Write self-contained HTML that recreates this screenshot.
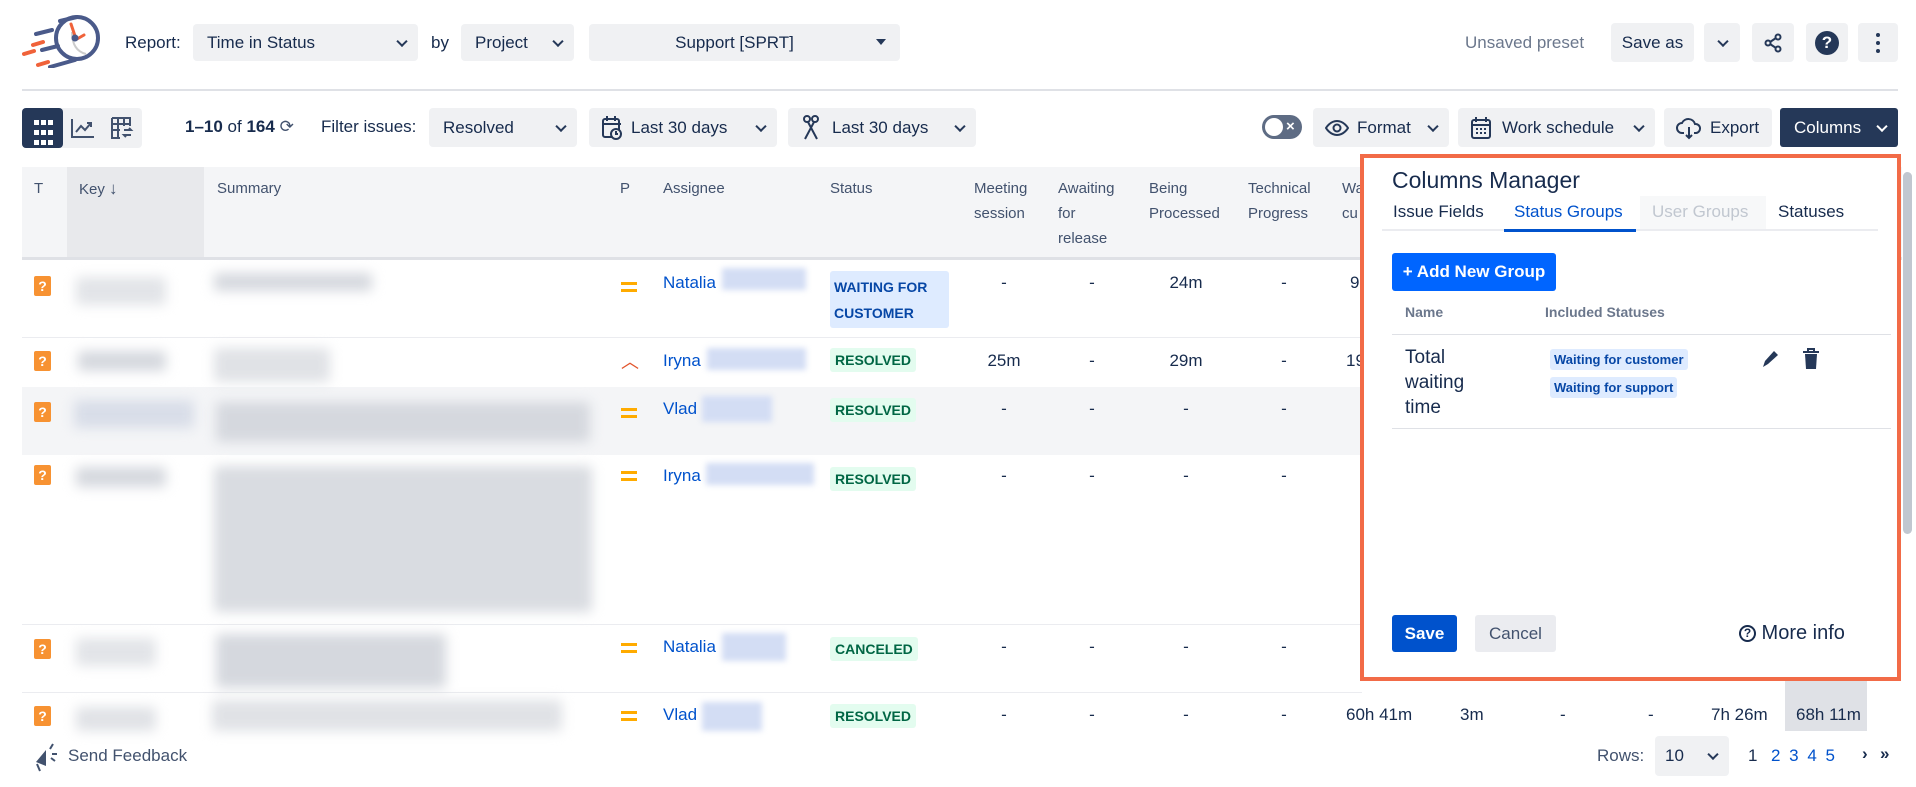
<!DOCTYPE html>
<html><head><meta charset="utf-8"><style>
*{box-sizing:border-box;margin:0;padding:0}
body{width:1916px;height:787px;overflow:hidden;background:#fff;font-family:"Liberation Sans",Arial,sans-serif;color:#172b4d;font-size:17px;position:relative}
.a{position:absolute}
.btn{position:absolute;background:#f0f1f3;border-radius:4px;display:flex;align-items:center;font-size:17px;color:#172b4d}
.chev{position:absolute;right:12px;top:50%;width:8px;height:8px;border-right:2px solid #253858;border-bottom:2px solid #253858;transform:translateY(-70%) rotate(45deg)}
.hd{position:absolute;font-size:15px;color:#42526e;line-height:25px}
.bl{position:absolute;background:#d5d8de;filter:blur(6px);border-radius:3px}
.bb{position:absolute;background:#d3ddf4;filter:blur(3px)}
.q{position:absolute;left:34px;width:17px;height:20px;background:#f79232;color:#fff;font-size:14px;font-weight:bold;text-align:center;line-height:20px;border-radius:2px}
.eq{position:absolute;left:621px;width:16px;height:10px;border-top:3px solid #ffab00;border-bottom:3px solid #ffab00}
.nm{position:absolute;left:663px;color:#0052cc;font-size:17px}
.lz{position:absolute;left:830px;background:#e3fcef;color:#006644;font-weight:bold;font-size:14px;padding:0 5px;line-height:24px;border-radius:3px}
.v{position:absolute;font-size:17px;text-align:center;width:60px;color:#172b4d}
.row{position:absolute;left:22px;width:1340px;border-top:1px solid #ebecf0}
</style></head><body>

<svg class="a" style="left:20px;top:12px" width="84" height="56" viewBox="0 0 84 56">
<circle cx="57" cy="26" r="21" fill="none" stroke="#4a5a8a" stroke-width="4"/>
<path d="M52 20 C52 34 58 40 66 42" stroke="#ccc" stroke-width="2" fill="none"/>
<line x1="51" y1="12" x2="55" y2="24" stroke="#f0623a" stroke-width="3" stroke-linecap="round"/>
<line x1="57" y1="27" x2="64" y2="23" stroke="#f0623a" stroke-width="3" stroke-linecap="round"/>
<circle cx="55" cy="26" r="3.5" fill="#4a5a8a"/>
<line x1="40" y1="9" x2="57" y2="5" stroke="#4a5a8a" stroke-width="4" stroke-linecap="round"/>
<line x1="16" y1="22" x2="32" y2="18" stroke="#4a5a8a" stroke-width="4" stroke-linecap="round"/>
<line x1="22" y1="38" x2="38" y2="34" stroke="#4a5a8a" stroke-width="4" stroke-linecap="round"/>
<line x1="30" y1="55" x2="55" y2="48" stroke="#4a5a8a" stroke-width="4" stroke-linecap="round"/>
<line x1="13" y1="33" x2="23" y2="30" stroke="#f0623a" stroke-width="4" stroke-linecap="round"/>
<line x1="4" y1="42" x2="14" y2="39" stroke="#f0623a" stroke-width="4" stroke-linecap="round"/>
<line x1="18" y1="53" x2="28" y2="50" stroke="#f0623a" stroke-width="4" stroke-linecap="round"/>
</svg>

<div class="a" style="left:125px;top:33px">Report:</div>
<div class="btn" style="left:193px;top:24px;width:225px;height:37px;padding-left:14px">Time in Status<span class="chev"></span></div>
<div class="a" style="left:431px;top:33px">by</div>
<div class="btn" style="left:461px;top:24px;width:113px;height:37px;padding-left:14px">Project<span class="chev"></span></div>
<div class="btn" style="left:589px;top:24px;width:311px;height:37px;justify-content:center;padding-right:20px">Support [SPRT]<span class="a" style="right:14px;top:15px;border:5px solid transparent;border-top:6px solid #253858"></span></div>

<div class="a" style="left:1465px;top:33px;color:#6b778c">Unsaved preset</div>
<div class="btn" style="left:1611px;top:23px;width:83px;height:39px;justify-content:center">Save as</div>
<div class="btn" style="left:1704px;top:23px;width:36px;height:39px"><span class="chev" style="right:13px"></span></div>
<div class="btn" style="left:1752px;top:23px;width:42px;height:39px;justify-content:center">
<svg width="20" height="20" viewBox="0 0 20 20" fill="none" stroke="#253858" stroke-width="2"><circle cx="15" cy="4" r="2.5"/><circle cx="5" cy="10" r="2.5"/><circle cx="15" cy="16" r="2.5"/><path d="M7 9l6-4M7 11l6 4"/></svg></div>
<div class="btn" style="left:1806px;top:23px;width:42px;height:39px;justify-content:center"><span style="width:24px;height:24px;border-radius:50%;background:#253858;color:#fff;font-weight:bold;font-size:17px;text-align:center;line-height:24px">?</span></div>
<div class="btn" style="left:1858px;top:23px;width:40px;height:39px;justify-content:center;flex-direction:column;gap:4px"><i style="width:4px;height:4px;background:#253858;border-radius:50%"></i><i style="width:4px;height:4px;background:#253858;border-radius:50%"></i><i style="width:4px;height:4px;background:#253858;border-radius:50%"></i></div>

<div class="a" style="left:22px;top:89px;width:1876px;height:2px;background:#dfe1e6"></div>

<div class="btn" style="left:22px;top:108px;width:120px;height:40px"></div>
<div class="a" style="left:22px;top:108px;width:41px;height:40px;background:#253858;border-radius:4px;display:grid;grid-template-columns:repeat(3,5px);gap:2px;padding:12px 0 0 12px">
<i style="background:#fff;height:5px"></i><i style="background:#fff;height:5px"></i><i style="background:#fff;height:5px"></i><i style="background:#fff;height:5px"></i><i style="background:#fff;height:5px"></i><i style="background:#fff;height:5px"></i><i style="background:#fff;height:5px"></i><i style="background:#fff;height:5px"></i><i style="background:#fff;height:5px"></i></div>
<svg class="a" style="left:70px;top:117px" width="26" height="22" viewBox="0 0 26 22" fill="none" stroke="#42526e" stroke-width="2"><path d="M2 2v18h22"/><path d="M6 15l5-6 4 4 6-7"/><path d="M17 6h4v4"/></svg>
<svg class="a" style="left:110px;top:116px" width="24" height="24" viewBox="0 0 24 24" fill="none" stroke="#42526e" stroke-width="2"><path d="M2 2h18v8M2 2v20h8M2 8h18M2 14h8M8 2v20M14 2v8"/><path d="M14 14h7l-2-2M21 19h-7l2 2"/></svg>

<div class="a" style="left:185px;top:117px"><b>1–10</b> of <b>164</b> <span style="color:#42526e">⟳</span></div>
<div class="a" style="left:321px;top:117px">Filter issues:</div>
<div class="btn" style="left:429px;top:108px;width:148px;height:39px;padding-left:14px">Resolved<span class="chev"></span></div>
<div class="btn" style="left:589px;top:108px;width:188px;height:39px;padding-left:12px">
<svg width="22" height="26" viewBox="0 0 22 26" fill="none" stroke="#253858" stroke-width="2"><rect x="2" y="4" width="16" height="18" rx="2"/><path d="M6 1v5M14 1v5M2 9h18"/><circle cx="15" cy="19" r="5" fill="#f0f1f3"/><path d="M15 16v3h2"/></svg>
<span style="margin-left:8px">Last 30 days</span><span class="chev"></span></div>
<div class="btn" style="left:788px;top:108px;width:188px;height:39px;padding-left:14px">
<svg width="18" height="26" viewBox="0 0 18 26" fill="none" stroke="#253858" stroke-width="2"><circle cx="5" cy="4" r="3"/><circle cx="13" cy="4" r="3"/><path d="M6 7l9 17M12 7L3 24"/></svg>
<span style="margin-left:12px">Last 30 days</span><span class="chev"></span></div>

<div class="a" style="left:1262px;top:115px;width:40px;height:24px;border-radius:12px;background:#5e6c84"><i class="a" style="left:3px;top:3px;width:18px;height:18px;border-radius:50%;background:#fff"></i><span class="a" style="left:24px;top:1px;color:#fff;font-size:15px;font-weight:bold;line-height:22px">×</span></div>
<div class="btn" style="left:1313px;top:108px;width:136px;height:39px;padding-left:12px">
<svg width="24" height="24" viewBox="0 0 24 24" fill="none" stroke="#253858" stroke-width="2"><path d="M1 12s4-7 11-7 11 7 11 7-4 7-11 7S1 12 1 12z"/><circle cx="12" cy="12" r="3.5"/></svg><span style="margin-left:8px">Format</span><span class="chev"></span></div>
<div class="btn" style="left:1458px;top:108px;width:197px;height:39px;padding-left:12px">
<svg width="22" height="24" viewBox="0 0 22 24" fill="none" stroke="#253858" stroke-width="2"><rect x="2" y="4" width="18" height="18" rx="2"/><path d="M6 1v5M16 1v5M2 9h18"/><path d="M6 13h2M10 13h2M14 13h2M6 17h2M10 17h2M14 17h2" stroke-width="2"/></svg><span style="margin-left:10px">Work schedule</span><span class="chev"></span></div>
<div class="btn" style="left:1664px;top:108px;width:108px;height:39px;padding-left:12px">
<svg width="26" height="24" viewBox="0 0 26 24" fill="none" stroke="#253858" stroke-width="2"><path d="M8 17H6a5 5 0 010-10 7 7 0 0113 1 4.5 4.5 0 011 9h-2"/><path d="M13 11v11M10 19l3 3 3-3"/></svg><span style="margin-left:8px">Export</span></div>
<div class="a" style="left:1780px;top:108px;width:118px;height:39px;background:#253858;border-radius:3px;color:#fff;display:flex;align-items:center;padding-left:14px">Columns<span class="chev" style="border-color:#fff"></span></div>

<div class="a" style="left:22px;top:167px;width:1880px;height:93px;background:#f4f5f7;border-bottom:3px solid #dfe1e6"></div>
<div class="a" style="left:67px;top:167px;width:137px;height:90px;background:#e8e9ec"></div>
<div class="hd" style="left:34px;top:176px">T</div>
<div class="hd" style="left:79px;top:176px">Key <b style="font-size:17px">↓</b></div>
<div class="hd" style="left:217px;top:176px">Summary</div>
<div class="hd" style="left:620px;top:176px">P</div>
<div class="hd" style="left:663px;top:176px">Assignee</div>
<div class="hd" style="left:830px;top:176px">Status</div>
<div class="hd" style="left:974px;top:176px">Meeting<br>session</div>
<div class="hd" style="left:1058px;top:176px">Awaiting<br>for<br>release</div>
<div class="hd" style="left:1149px;top:176px">Being<br>Processed</div>
<div class="hd" style="left:1248px;top:176px">Technical<br>Progress</div>
<div class="hd" style="left:1342px;top:176px">Wa<br>cu</div>

<div class="a" style="left:22px;top:387px;width:1340px;height:68px;background:#f4f5f7"></div>
<div class="row" style="top:337px"></div><div class="row" style="top:624px"></div><div class="row" style="top:692px"></div>

<div class="q" style="top:276px">?</div>
<div class="bl" style="left:76px;top:277px;width:90px;height:28px;background:#e2e4e8"></div>
<div class="bl" style="left:214px;top:273px;width:158px;height:18px"></div>
<div class="eq" style="top:282px"></div>
<div class="nm" style="top:273px">Natalia</div><div class="bb" style="left:722px;top:268px;width:84px;height:22px"></div>
<div class="a" style="left:830px;top:271px;width:119px;height:57px;background:#deebff;border-radius:3px;color:#0747a6;font-weight:bold;font-size:14px;line-height:26px;padding:3px 4px">WAITING FOR<br>CUSTOMER</div>
<div class="v" style="left:974px;top:273px">-</div><div class="v" style="left:1062px;top:273px">-</div><div class="v" style="left:1156px;top:273px">24m</div><div class="v" style="left:1254px;top:273px">-</div><div class="a" style="left:1350px;top:273px">9</div>

<div class="q" style="top:351px">?</div>
<div class="bl" style="left:78px;top:351px;width:88px;height:20px"></div>
<div class="bl" style="left:214px;top:348px;width:116px;height:34px;background:#e0e2e6"></div>
<div class="a" style="left:621px;top:348px;color:#e2552d;font-size:18px">︿</div>
<div class="nm" style="top:351px">Iryna</div><div class="bb" style="left:707px;top:348px;width:99px;height:22px"></div>
<div class="lz" style="top:348px">RESOLVED</div>
<div class="v" style="left:974px;top:351px">25m</div><div class="v" style="left:1062px;top:351px">-</div><div class="v" style="left:1156px;top:351px">29m</div><div class="v" style="left:1254px;top:351px">-</div><div class="a" style="left:1346px;top:351px">19</div>

<div class="q" style="top:402px">?</div>
<div class="bl" style="left:74px;top:400px;width:120px;height:28px;background:#d8dde8"></div>
<div class="bl" style="left:216px;top:402px;width:374px;height:40px"></div>
<div class="eq" style="top:408px"></div>
<div class="nm" style="top:399px">Vlad</div><div class="bb" style="left:702px;top:396px;width:70px;height:26px"></div>
<div class="lz" style="top:398px">RESOLVED</div>
<div class="v" style="left:974px;top:399px">-</div><div class="v" style="left:1062px;top:399px">-</div><div class="v" style="left:1156px;top:399px">-</div><div class="v" style="left:1254px;top:399px">-</div>

<div class="q" style="top:465px">?</div>
<div class="bl" style="left:76px;top:467px;width:90px;height:20px"></div>
<div class="bl" style="left:214px;top:466px;width:378px;height:146px;background:#d9dce1"></div>
<div class="eq" style="top:471px"></div>
<div class="nm" style="top:466px">Iryna</div><div class="bb" style="left:706px;top:463px;width:108px;height:22px"></div>
<div class="lz" style="top:467px">RESOLVED</div>
<div class="v" style="left:974px;top:466px">-</div><div class="v" style="left:1062px;top:466px">-</div><div class="v" style="left:1156px;top:466px">-</div><div class="v" style="left:1254px;top:466px">-</div>

<div class="q" style="top:639px">?</div>
<div class="bl" style="left:76px;top:638px;width:80px;height:28px;background:#e2e4e8"></div>
<div class="bl" style="left:216px;top:634px;width:230px;height:54px"></div>
<div class="eq" style="top:643px"></div>
<div class="nm" style="top:637px">Natalia</div><div class="bb" style="left:722px;top:633px;width:64px;height:28px"></div>
<div class="lz" style="top:637px">CANCELED</div>
<div class="v" style="left:974px;top:637px">-</div><div class="v" style="left:1062px;top:637px">-</div><div class="v" style="left:1156px;top:637px">-</div><div class="v" style="left:1254px;top:637px">-</div>

<div class="q" style="top:706px">?</div>
<div class="bl" style="left:76px;top:707px;width:80px;height:24px;background:#e0e2e6"></div>
<div class="bl" style="left:212px;top:700px;width:350px;height:31px;background:#e0e2e6"></div>
<div class="eq" style="top:711px"></div>
<div class="nm" style="top:705px">Vlad</div><div class="bb" style="left:702px;top:702px;width:60px;height:29px"></div>
<div class="lz" style="top:704px">RESOLVED</div>
<div class="v" style="left:974px;top:705px">-</div><div class="v" style="left:1062px;top:705px">-</div><div class="v" style="left:1156px;top:705px">-</div><div class="v" style="left:1254px;top:705px">-</div>
<div class="a" style="left:1785px;top:670px;width:82px;height:61px;background:#dfe1e6"></div>
<div class="a" style="left:1346px;top:705px">60h 41m</div><div class="a" style="left:1460px;top:705px">3m</div><div class="a" style="left:1560px;top:705px">-</div><div class="a" style="left:1648px;top:705px">-</div><div class="a" style="left:1711px;top:705px">7h 26m</div><div class="a" style="left:1796px;top:705px">68h 11m</div>

<svg class="a" style="left:34px;top:742px" width="28" height="30" viewBox="0 0 28 30"><path d="M2 20L12 8v16z" fill="#42526e"/><path d="M3 22l3 7" stroke="#42526e" stroke-width="2"/><path d="M16 7l3-5M18 12h5M17 16l4 3" stroke="#42526e" stroke-width="2"/></svg>
<div class="a" style="left:68px;top:746px;color:#42526e">Send Feedback</div>
<div class="a" style="left:1597px;top:746px;color:#42526e">Rows:</div>
<div class="btn" style="left:1655px;top:736px;width:74px;height:40px;padding-left:10px">10<span class="chev"></span></div>
<div class="a" style="left:1748px;top:746px">1</div>
<div class="a" style="left:1771px;top:746px;color:#0052cc;word-spacing:4px">2 3 4 5</div>
<div class="a" style="left:1862px;top:744px;font-weight:bold">›</div><div class="a" style="left:1880px;top:744px;font-weight:bold">»</div>

<div class="a" style="left:1360px;top:154px;width:541px;height:527px;border:4px solid #f26b47;background:#fff"></div>
<div class="a" style="left:1392px;top:167px;font-size:23px;color:#172b4d">Columns Manager</div>
<div class="a" style="left:1382px;top:229px;width:496px;height:2px;background:#ebecf0"></div>
<div class="a" style="left:1393px;top:202px;color:#172b4d">Issue Fields</div>
<div class="a" style="left:1514px;top:202px;color:#0052cc">Status Groups</div>
<div class="a" style="left:1504px;top:229px;width:132px;height:3px;background:#0052cc"></div>
<div class="a" style="left:1640px;top:196px;width:126px;height:33px;background:#f7f8f9"></div>
<div class="a" style="left:1652px;top:202px;color:#c1c7d0">User Groups</div>
<div class="a" style="left:1778px;top:202px;color:#172b4d">Statuses</div>
<div class="a" style="left:1392px;top:253px;width:164px;height:38px;background:#0065ff;border-radius:3px;color:#fff;font-weight:bold;line-height:38px;text-align:center">+ Add New Group</div>
<div class="a" style="left:1405px;top:304px;font-size:14px;color:#6b778c;font-weight:bold">Name</div>
<div class="a" style="left:1545px;top:304px;font-size:14px;color:#6b778c;font-weight:bold">Included Statuses</div>
<div class="a" style="left:1392px;top:334px;width:499px;height:1px;background:#dfe1e6"></div>
<div class="a" style="left:1405px;top:345px;font-size:19px;line-height:25px">Total<br>waiting<br>time</div>
<div class="a" style="left:1550px;top:349px;background:#deebff;color:#0747a6;font-weight:bold;font-size:13px;padding:0 4px;line-height:21px;border-radius:3px">Waiting for customer</div>
<div class="a" style="left:1550px;top:377px;background:#deebff;color:#0747a6;font-weight:bold;font-size:13px;padding:0 4px;line-height:21px;border-radius:3px">Waiting for support</div>
<svg class="a" style="left:1760px;top:349px" width="20" height="22" viewBox="0 0 20 22"><path d="M3 18l2-6 9-10 4 4-10 9z" fill="#253858"/></svg>
<svg class="a" style="left:1802px;top:348px" width="18" height="22" viewBox="0 0 18 22"><path d="M1 4h16M6 4V1h6v3" stroke="#253858" stroke-width="2" fill="none"/><path d="M3 6h12l-1 15H4z" fill="#253858"/></svg>
<div class="a" style="left:1392px;top:428px;width:499px;height:1px;background:#dfe1e6"></div>
<div class="a" style="left:1392px;top:615px;width:65px;height:37px;background:#0052cc;border-radius:3px;color:#fff;font-weight:bold;line-height:37px;text-align:center">Save</div>
<div class="a" style="left:1475px;top:615px;width:81px;height:37px;background:#ebecf0;border-radius:3px;color:#42526e;line-height:37px;text-align:center">Cancel</div>
<div class="a" style="left:1739px;top:622px;font-size:20px;color:#172b4d"><span style="display:inline-block;width:17px;height:17px;border:2px solid #172b4d;border-radius:50%;font-size:12px;text-align:center;line-height:13px;vertical-align:2px;font-weight:bold">?</span> More info</div>
<div class="a" style="left:1903px;top:172px;width:9px;height:362px;background:#c1c7d0;border-radius:5px"></div>
</body></html>
